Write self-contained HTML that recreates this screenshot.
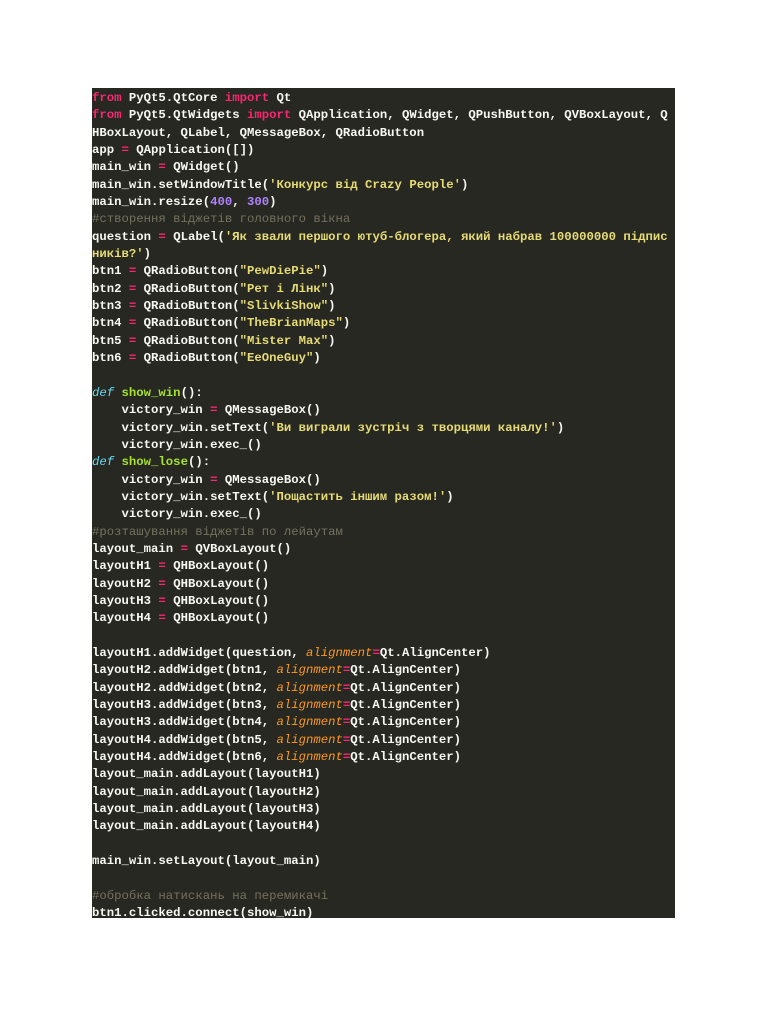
<!DOCTYPE html>
<html><head><meta charset="utf-8"><style>
body{margin:0;background:#fff;width:768px;height:1024px;position:relative}
pre{position:absolute;left:92px;top:88px;width:583px;height:828px;margin:0;padding:2px 0 0 0;background:#272822;color:#f8f8f2;font:bold 12.3px/17.35px "Liberation Mono","DejaVu Sans Mono",monospace;white-space:pre;overflow:hidden}
.k{color:#f92672}.s{color:#e6db74}.n{color:#ae81ff}.c{color:#75715e;font-weight:normal}.d{color:#66d9ef;font-style:italic;font-weight:normal}.f{color:#a6e22e}.p{color:#fd971f;font-style:italic;font-weight:normal}
</style></head><body><pre><span class="k">from</span> PyQt5.QtCore <span class="k">import</span> Qt
<span class="k">from</span> PyQt5.QtWidgets <span class="k">import</span> QApplication, QWidget, QPushButton, QVBoxLayout, Q
HBoxLayout, QLabel, QMessageBox, QRadioButton
app <span class="k">=</span> QApplication([])
main_win <span class="k">=</span> QWidget()
main_win.setWindowTitle(<span class="s">'Конкурс від Crazy People'</span>)
main_win.resize(<span class="n">400</span>, <span class="n">300</span>)
<span class="c">#створення віджетів головного вікна</span>
question <span class="k">=</span> QLabel(<span class="s">'Як звали першого ютуб-блогера, який набрав 100000000 підпис
ників?'</span>)
btn1 <span class="k">=</span> QRadioButton(<span class="s">"PewDiePie"</span>)
btn2 <span class="k">=</span> QRadioButton(<span class="s">"Рет і Лінк"</span>)
btn3 <span class="k">=</span> QRadioButton(<span class="s">"SlivkiShow"</span>)
btn4 <span class="k">=</span> QRadioButton(<span class="s">"TheBrianMaps"</span>)
btn5 <span class="k">=</span> QRadioButton(<span class="s">"Mister Max"</span>)
btn6 <span class="k">=</span> QRadioButton(<span class="s">"EeOneGuy"</span>)

<span class="d">def</span> <span class="f">show_win</span>():
    victory_win <span class="k">=</span> QMessageBox()
    victory_win.setText(<span class="s">'Ви виграли зустріч з творцями каналу!'</span>)
    victory_win.exec_()
<span class="d">def</span> <span class="f">show_lose</span>():
    victory_win <span class="k">=</span> QMessageBox()
    victory_win.setText(<span class="s">'Пощастить іншим разом!'</span>)
    victory_win.exec_()
<span class="c">#розташування віджетів по лейаутам</span>
layout_main <span class="k">=</span> QVBoxLayout()
layoutH1 <span class="k">=</span> QHBoxLayout()
layoutH2 <span class="k">=</span> QHBoxLayout()
layoutH3 <span class="k">=</span> QHBoxLayout()
layoutH4 <span class="k">=</span> QHBoxLayout()

layoutH1.addWidget(question, <span class="p">alignment</span><span class="k">=</span>Qt.AlignCenter)
layoutH2.addWidget(btn1, <span class="p">alignment</span><span class="k">=</span>Qt.AlignCenter)
layoutH2.addWidget(btn2, <span class="p">alignment</span><span class="k">=</span>Qt.AlignCenter)
layoutH3.addWidget(btn3, <span class="p">alignment</span><span class="k">=</span>Qt.AlignCenter)
layoutH3.addWidget(btn4, <span class="p">alignment</span><span class="k">=</span>Qt.AlignCenter)
layoutH4.addWidget(btn5, <span class="p">alignment</span><span class="k">=</span>Qt.AlignCenter)
layoutH4.addWidget(btn6, <span class="p">alignment</span><span class="k">=</span>Qt.AlignCenter)
layout_main.addLayout(layoutH1)
layout_main.addLayout(layoutH2)
layout_main.addLayout(layoutH3)
layout_main.addLayout(layoutH4)

main_win.setLayout(layout_main)

<span class="c">#обробка натискань на перемикачі</span>
btn1.clicked.connect(show_win)
</pre></body></html>
